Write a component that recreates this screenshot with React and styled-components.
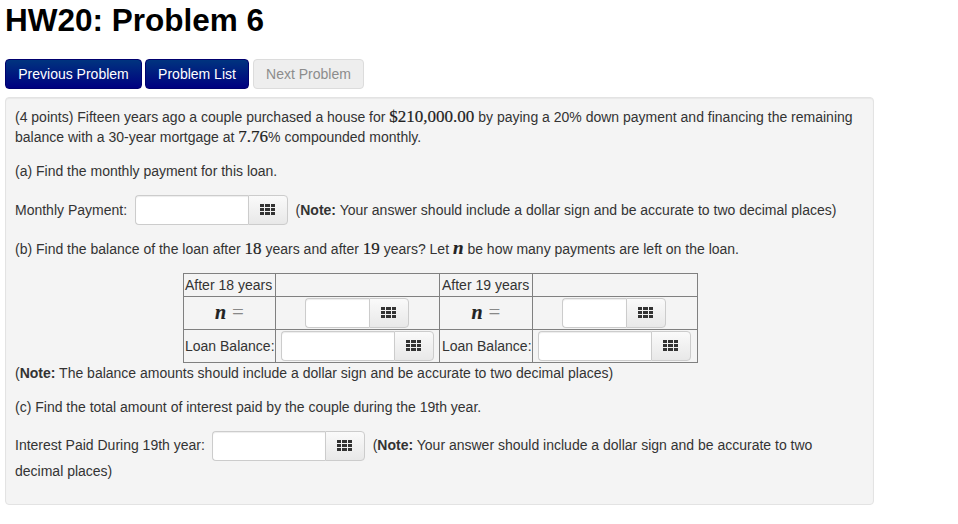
import React from "react";
import styled, { createGlobalStyle } from "styled-components";

const Global = createGlobalStyle`
  html, body { margin: 0; padding: 0; background: #fff; }
  body { font-family: "Liberation Sans", Arial, sans-serif; font-size: 14px; color: #333; line-height: 20px; }
`;
const Page = styled.div`
  width: 869px;
  padding: 0 0 0 5px;
`;
const Title = styled.h1`
  margin: 0;
  padding-top: 2px;
  height: 59px;
  box-sizing: border-box;
  font-size: 31.5px;
  line-height: 36px;
  font-weight: 700;
  color: #000;
`;
const Nav = styled.div`
  display: flex;
  gap: 3px;
  height: 30px;
  margin-bottom: 8px;
`;
const NavButton = styled.span`
  display: flex;
  align-items: center;
  justify-content: center;
  box-sizing: border-box;
  height: 30px;
  width: ${(p) => p.$w}px;
  margin-left: ${(p) => p.$ml || 0}px;
  border-radius: 4px;
  border: 1px solid ${(p) => (p.$disabled ? "#dcdcdc" : "#00006e")};
  background: ${(p) => (p.$disabled ? "#eeeeee" : "linear-gradient(#00347f, #000080)")};
  color: ${(p) => (p.$disabled ? "#8c8c8c" : "#fff")};
  font-size: 14px;
`;
const Well = styled.div`
  box-sizing: border-box;
  height: 408px;
  padding: 10px 9px 0;
  background: #f4f4f4;
  border: 1px solid #e3e3e3;
  border-radius: 4px;
  box-shadow: inset 0 1px 1px rgba(0, 0, 0, 0.05);
`;
const Para = styled.p`
  margin: 0 0 ${(p) => p.$mb ?? 0}px;
  line-height: ${(p) => p.$lh || 19.6}px;
`;
const Row = styled.div`
  display: flex;
  align-items: center;
  height: 30px;
  margin-bottom: ${(p) => p.$mb ?? 0}px;
`;
const Math = styled.span`
  font-family: "Liberation Serif", "Times New Roman", serif;
  font-size: ${(p) => p.$size || 17}px;
  color: #222;
  line-height: 1;
  font-style: ${(p) => (p.$italic ? "italic" : "normal")};
  font-weight: ${(p) => (p.$bold ? 700 : 400)};
  -webkit-text-stroke: 0.2px #222;
`;
const Equals = styled.span`
  font-family: "Liberation Serif", "Times New Roman", serif;
  font-size: 21px;
  line-height: 1;
  color: #888;
  margin-left: 2px;
`;
const Group = styled.span`
  display: inline-flex;
  flex: none;
  vertical-align: middle;
  width: ${(p) => p.$w}px;
  height: 30px;
  margin: ${(p) => p.$m || 0};
`;
const Field = styled.span`
  flex: 1;
  box-sizing: border-box;
  background: #fff;
  border: 1px solid #ccc;
  border-right: 0;
  border-radius: 4px 0 0 4px;
  box-shadow: inset 0 1px 1px rgba(0, 0, 0, 0.075);
`;
const Addon = styled.span`
  flex: none;
  display: flex;
  align-items: center;
  justify-content: center;
  box-sizing: border-box;
  width: 40px;
  padding: 0 1px 1px 0;
  background: linear-gradient(#fafafa, #e8e8e8);
  border: 1px solid #ccc;
  border-radius: 0 4px 4px 0;
`;
const GridTable = styled.table`
  border-collapse: collapse;
  table-layout: fixed;
  width: 514px;
  margin: 0 0 1px 168px;
  border: 1px solid #333;
`;
const Cell = styled.td`
  box-sizing: border-box;
  border: 1px solid #808080;
  padding: 0 1px 0 ${(p) => p.$pl ?? 1}px;
  text-align: ${(p) => (p.$center ? "center" : "left")};
  line-height: 20px;
  white-space: nowrap;
`;
const TallRow = styled.tr`
  height: ${(p) => p.$h}px;
`;
const GridIcon = () => (
  <svg width="15" height="11" viewBox="0 0 15 11" aria-hidden="true">
    <path
      fill="#333"
      d="M0 0h4v3H0zM5 0h5v3H5zM11 0h4v3h-4zM0 4h4v3H0zM5 4h5v3H5zM11 4h4v3h-4zM0 8h4v3H0zM5 8h5v3H5zM11 8h4v3h-4z"
    />
  </svg>
);
const Answer = ({ w, m }) => (
  <Group $w={w} $m={m}>
    <Field />
    <Addon>
      <GridIcon />
    </Addon>
  </Group>
);
const NEq = () => (
  <>
    <Math $italic $bold $size={20}>n</Math> <Equals>=</Equals>
  </>
);

export default function App() {
  return (
    <Page>
      <Global />
      <Title>HW20: Problem 6</Title>
      <Nav>
        <NavButton $w={137}>Previous Problem</NavButton>
        <NavButton $w={104}>Problem List</NavButton>
        <NavButton $w={111} $ml={1} $disabled>Next Problem</NavButton>
      </Nav>
      <Well>
        <Para $mb={14.6}>
          (4 points) Fifteen years ago a couple purchased a house for <Math>$210,000.00</Math> by paying a 20% down payment and financing the remaining balance with a 30-year mortgage at <Math>7.76</Math>% compounded monthly.
        </Para>
        <Para $mb={13.5}>(a) Find the monthly payment for this loan.</Para>
        <Row $mb={13.5}>
          <span>Monthly Payment:</span>
          <Answer w={153} m="0 7.5px 0 8px" />
          <span>(<b>Note:</b> Your answer should include a dollar sign and be accurate to two decimal places)</span>
        </Row>
        <Para $mb={13}>
          (b) Find the balance of the loan after <Math>18</Math> years and after <Math>19</Math> years? Let <Math $italic $bold $size={19}>n</Math> be how many payments are left on the loan.
        </Para>
        <GridTable>
          <colgroup>
            <col style={{ width: 92 }} />
            <col style={{ width: 164 }} />
            <col style={{ width: 93 }} />
            <col style={{ width: 165 }} />
          </colgroup>
          <tbody>
            <TallRow $h={23}>
              <Cell>After 18 years</Cell>
              <Cell />
              <Cell $pl={2}>After 19 years</Cell>
              <Cell />
            </TallRow>
            <TallRow $h={33}>
              <Cell $center><NEq /></Cell>
              <Cell $center><Answer w={104} m="0 2px 0 0" /></Cell>
              <Cell $center><NEq /></Cell>
              <Cell $center><Answer w={104} m="0 2px 0 0" /></Cell>
            </TallRow>
            <TallRow $h={33}>
              <Cell>Loan Balance:</Cell>
              <Cell $center><Answer w={153} /></Cell>
              <Cell $pl={2}>Loan Balance:</Cell>
              <Cell $center><Answer w={153} m="0 2px 0 0" /></Cell>
            </TallRow>
          </tbody>
        </GridTable>
        <Para $mb={14.5}>(<b>Note:</b> The balance amounts should include a dollar sign and be accurate to two decimal places)</Para>
        <Para $mb={15.5}>(c) Find the total amount of interest paid by the couple during the 19th year.</Para>
        <Para $lh={25}>
          Interest Paid During 19th year: <Answer w={153} m="-2.5px 4px -2.5px 3px" /> <span>(<b>Note:</b> Your answer should include a dollar sign and be accurate to two decimal places)</span>
        </Para>
      </Well>
    </Page>
  );
}
